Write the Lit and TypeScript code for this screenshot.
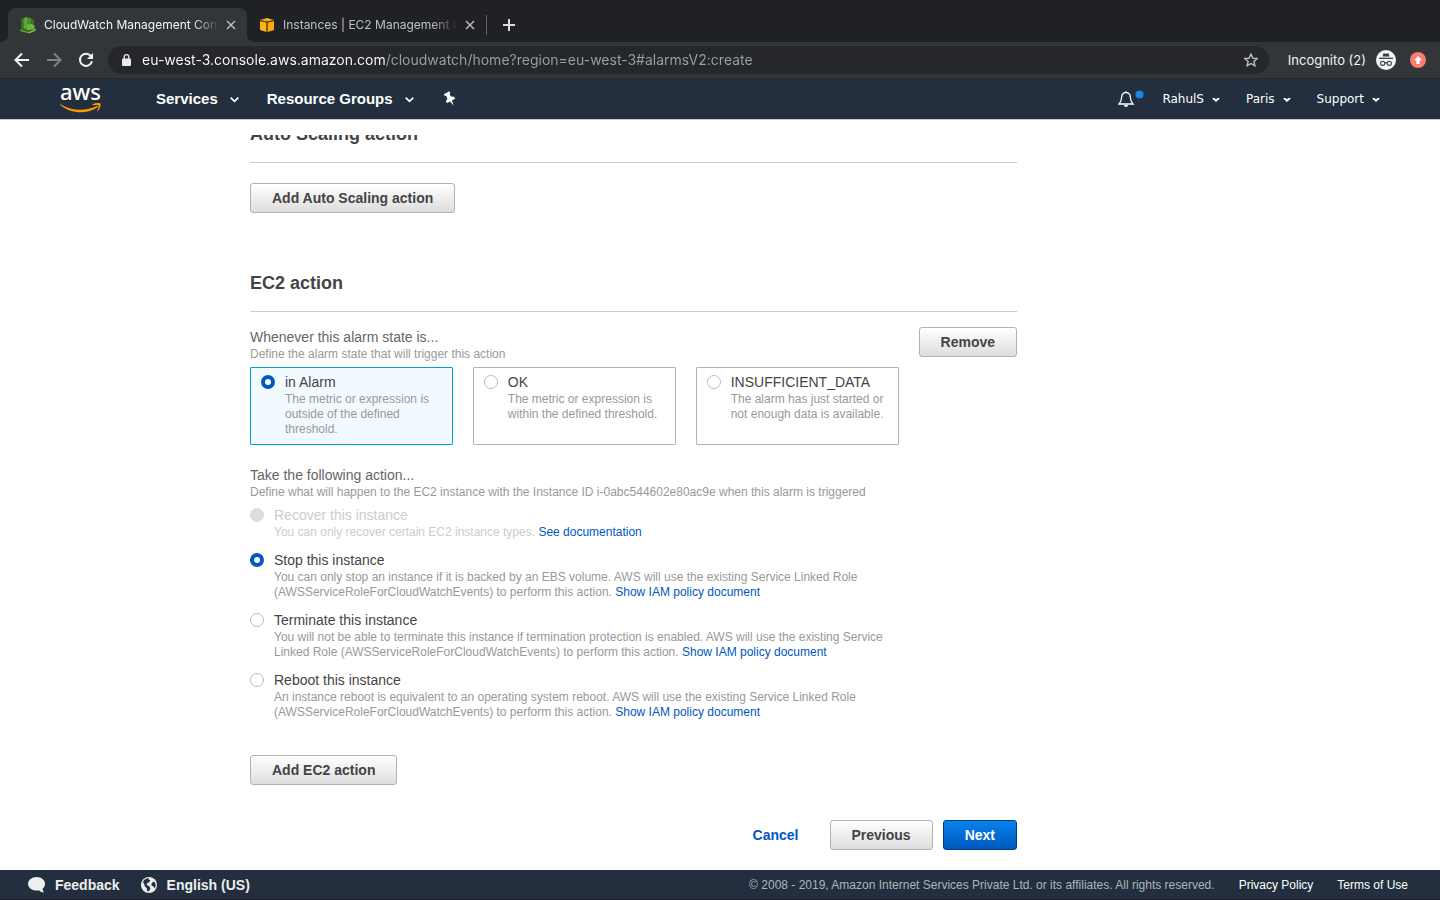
import { LitElement, html, css } from "lit";
import { customElement, state } from "lit/decorators.js";
import { classMap } from "lit/directives/class-map.js";

const resetButtons = css`
  :host,
  * {
    box-sizing: border-box;
  }
  button {
    margin: 0;
    padding: 0;
    border: 0;
    background: none;
    font: inherit;
    color: inherit;
    cursor: pointer;
    display: inline-flex;
    align-items: center;
    white-space: nowrap;
  }
  svg {
    display: block;
    flex: none;
  }
`;

const closeIcon = html`<svg width="10" height="10" viewBox="0 0 10 10">
  <path d="M1 1l8 8M9 1l-8 8" stroke="currentColor" stroke-width="1.4" fill="none" />
</svg>`;

const cloudWatchIcon = html`<svg width="18" height="18" viewBox="0 0 18 18">
  <path d="M1 13.500l7-2.500 9 2-7 3z" fill="#3a7323" />
  <path d="M2.500 3L5 1.800V12l-2.500 1z" fill="#3f7f26" />
  <path d="M5 1.800L8 1v11.500L5 12.800z" fill="#5fa636" />
  <path d="M8 1l4.500 1.500V9L8 10z" fill="#4a8f2c" />
  <path d="M8 8.500l4.500-.8L15.500 9v4.500L8 14z" fill="#6cb33e" />
  <path d="M12.500 2.500v5.200L15 9V4z" fill="#3a7323" />
  <path d="M1 13.500l9 2.500v1.500l-9-2.500z" fill="#5fa23a" />
  <path d="M10 16l7-3v1.500l-7 3z" fill="#86c257" />
</svg>`;

const ec2Icon = html`<svg width="16" height="16" viewBox="0 0 16 16">
  <path d="M1 3l7-2 7 2-7 1.500z" fill="#fcb316" />
  <path d="M1 4l6.500 1.500V15L1 13z" fill="#fcb316" />
  <path d="M8.500 5.500L15 4v9l-6.500 2z" fill="#fbaa0a" />
  <path d="M1 3.500l7 1.500 7-1.500M8 5v10" stroke="#7a4d08" stroke-width=".8" fill="none" />
</svg>`;

@customElement("browser-chrome")
export class BrowserChrome extends LitElement {
  static styles = [
    resetButtons,
    css`
      :host {
        display: block;
        font-family: Inter, "Noto Sans", sans-serif;
        color: #f1f3f4;
        background: #202124;
      }
      .strip {
        display: flex;
        height: 42px;
        padding: 8px 8px 0;
      }
      .tab {
        position: relative;
        display: flex;
        align-items: center;
        width: 239px;
        padding: 0 11px;
        gap: 7px;
        font-size: 12px;
        color: #bdc1c6;
      }
      .tab.active {
        background: #323639;
        color: #f1f3f4;
        border-radius: 8px 8px 0 0;
      }
      .tab.active::before,
      .tab.active::after {
        content: "";
        position: absolute;
        bottom: 0;
        width: 8px;
        height: 8px;
      }
      .tab.active::before {
        right: 100%;
        background: radial-gradient(circle at 0 0, transparent 8px, #323639 8px);
      }
      .tab.active::after {
        left: 100%;
        background: radial-gradient(circle at 100% 0, transparent 8px, #323639 8px);
      }
      .title {
        flex: 1;
        min-width: 0;
        overflow: hidden;
        white-space: nowrap;
        line-height: 16px;
        mask-image: linear-gradient(to right, #000 85%, transparent);
      }
      .icon {
        width: 18px;
        display: flex;
        justify-content: center;
      }
      .tab .close {
        color: #bdc1c6;
      }
      .divider {
        width: 1px;
        height: 20px;
        align-self: center;
        background: #5f6368;
      }
      .new {
        padding: 0 16px;
        color: #dadce0;
      }
      .toolbar {
        display: flex;
        align-items: center;
        height: 37px;
        padding: 0 14px;
        background: #323639;
        border-bottom: 1px solid #25282a;
      }
      .moves {
        display: flex;
        gap: 16px;
      }
      .moves .off {
        color: #7f8387;
      }
      .omnibox {
        flex: 1;
        display: flex;
        align-items: center;
        gap: 10px;
        height: 28px;
        margin: 0 19px 0 14px;
        padding: 0 11px 0 13px;
        border-radius: 14px;
        background: #25272a;
      }
      .url {
        flex: 1;
        min-width: 0;
        height: 20px;
        padding: 0;
        border: 0;
        outline: 0;
        font: 14px/20px Inter, "Noto Sans", sans-serif;
        color: #9aa0a6;
        -webkit-text-fill-color: transparent;
        background: linear-gradient(to right, #fff 243px, #9aa0a6 243px);
        -webkit-background-clip: text;
        background-clip: text;
      }
      .profile {
        display: flex;
        align-items: center;
        gap: 10px;
        font-size: 13px;
      }
      .update {
        margin-left: 14px;
      }
    `,
  ];

  render() {
    return html`
      <div class="strip">
        <div class="tab active">
          <span class="icon">${cloudWatchIcon}</span>
          <span class="title">CloudWatch Management Console</span>
          <button class="close" aria-label="Close tab">${closeIcon}</button>
        </div>
        <div class="tab">
          <span class="icon">${ec2Icon}</span>
          <span class="title">Instances | EC2 Management Console</span>
          <button class="close" aria-label="Close tab">${closeIcon}</button>
        </div>
        <span class="divider"></span>
        <button class="new" aria-label="New tab">
          <svg width="12" height="12" viewBox="0 0 12 12">
            <path d="M6 0v12M0 6h12" stroke="currentColor" stroke-width="2" />
          </svg>
        </button>
      </div>
      <div class="toolbar">
        <div class="moves">
          <button aria-label="Back">
            <svg width="16" height="16" viewBox="0 0 16 16" fill="none" stroke="currentColor" stroke-width="2">
              <path d="M15 8H2M8 1.500L1.500 8 8 14.500" />
            </svg>
          </button>
          <button class="off" aria-label="Forward">
            <svg width="16" height="16" viewBox="0 0 16 16" fill="none" stroke="currentColor" stroke-width="2">
              <path d="M1 8h13M8 1.500L14.500 8 8 14.500" />
            </svg>
          </button>
          <button aria-label="Reload">
            <svg width="16" height="16" viewBox="0 0 16 16">
              <path d="M13.200 4.500A6.100 6.100 0 1 0 14 9.200" fill="none" stroke="currentColor" stroke-width="2" />
              <path d="M15 1v6H9z" fill="currentColor" />
            </svg>
          </button>
        </div>
        <div class="omnibox">
          <svg width="11" height="12" viewBox="0 0 11 12">
            <rect x="1" y="4.500" width="9" height="7.500" rx="1" fill="#e8eaed" />
            <path d="M3.200 5V3a2.300 2.300 0 0 1 4.600 0v2" fill="none" stroke="#e8eaed" stroke-width="1.300" />
          </svg>
          <input
            class="url"
            aria-label="Address"
            value="eu-west-3.console.aws.amazon.com/cloudwatch/home?region=eu-west-3#alarmsV2:create"
          />
          <button aria-label="Bookmark">
            <svg width="14" height="14" viewBox="0 0 14 14">
              <path
                d="M7 1l1.800 4.100 4.400.4-3.300 2.900 1 4.400L7 10.500l-3.900 2.300 1-4.400L.8 5.500l4.400-.4z"
                fill="none"
                stroke="#bdc1c6"
                stroke-width="1.400"
              />
            </svg>
          </button>
        </div>
        <div class="profile">
          <span>Incognito (2)</span>
          <svg width="20" height="20" viewBox="0 0 20 20">
            <circle cx="10" cy="10" r="10" fill="#f1f3f4" />
            <path d="M6.600 6.500l.9-3.200 2.500.5 2.500-.5.9 3.200z" fill="#3c4043" />
            <path d="M3 8.300h14" stroke="#3c4043" stroke-width="1.300" />
            <g fill="none" stroke="#3c4043" stroke-width="1.100">
              <circle cx="6.700" cy="13.300" r="2.100" />
              <circle cx="13.300" cy="13.300" r="2.100" />
              <path d="M8.800 13q1.200-.7 2.400 0" />
            </g>
          </svg>
        </div>
        <button class="update" aria-label="Update available">
          <svg width="16" height="16" viewBox="0 0 16 16">
            <circle cx="8" cy="8" r="8" fill="#fa7b72" />
            <path d="M8 4l4 4.200H9.700V12H6.300V8.200H4z" fill="#fff" />
          </svg>
        </button>
      </div>
    `;
  }
}

const wideChevron = html`<svg width="9" height="8" viewBox="0 0 9 8">
  <path d="M.7 2.700l3.800 3.600 3.800-3.600" fill="none" stroke="#fff" stroke-width="1.700" />
</svg>`;
const smallChevron = html`<svg width="8" height="7" viewBox="0 0 8 7">
  <path d="M.6 2h2l1.400 1.200L5.400 2h2v1L4 6 .6 3z" fill="#fff" />
</svg>`;

@customElement("aws-nav")
export class AwsNav extends LitElement {
  static styles = [
    resetButtons,
    css`
      :host {
        display: flex;
        align-items: center;
        height: 41px;
        padding: 0 60px;
        background: #232f3e;
        border-bottom: 1px solid #c8ccd0;
        color: #fff;
      }
      .logo {
        display: flex;
        flex-direction: column;
        align-items: center;
        width: 41px;
        margin-right: 55px;
        color: #fff;
        text-decoration: none;
        font: 500 22px/11px "Noto Sans", sans-serif;
      }
      .word {
        height: 17px;
      }
      .main {
        display: flex;
        align-items: center;
        gap: 28px;
        font: bold 15px/20px "Liberation Sans", Arial, sans-serif;
      }
      .main button {
        gap: 12px;
      }
      .side {
        display: flex;
        align-items: center;
        gap: 26px;
        margin-left: auto;
        font: 12px/18px "DejaVu Sans", Verdana, sans-serif;
      }
      .side button {
        gap: 8px;
      }
      .side .bell {
        margin-right: -8px;
      }
    `,
  ];

  render() {
    return html`
      <a class="logo" href="#" aria-label="aws">
        <span class="word">aws</span>
        <svg width="41" height="10" viewBox="0 0 41 10">
          <path d="M.5 1.200C12 8 25 8.300 36.500 3.200c1-.4 1.700.6.900 1.200C27 11.500 10.500 10.800.3 1.900c-.4-.4-.2-.9.200-.7z" fill="#f90" />
          <path d="M32.500 1.500C35 0 39.500-.3 40.300.6c.8 1-.2 5.400-2.500 7.600-.4.300-.7.200-.5-.3.600-1.400 1.700-4.700 1.200-5.500-.6-.7-4-.4-5.600-.2-.5.100-.7-.4-.4-.7z" fill="#f90" />
        </svg>
      </a>
      <div class="main">
        <button>Services ${wideChevron}</button>
        <button>Resource Groups ${wideChevron}</button>
        <button aria-label="Pin shortcuts">
          <svg width="16" height="16" viewBox="0 0 16 16">
            <path
              d="M4.800.8h6.400v1.700l-1.200.8v3l2.600 1.700v2.200H9L8 15.600 7 10.200H3.400V8L6 6.300v-3l-1.200-.8z"
              transform="rotate(-28 8 8)"
              fill="#fff"
            />
          </svg>
        </button>
      </div>
      <div class="side">
        <button class="bell" aria-label="Notifications">
          <svg width="26" height="18" viewBox="0 0 26 18">
            <path
              d="M8 1.200v1.300M8 2.500c-3 0-4.400 2-4.400 5 0 3.500-1 4.700-2.600 6.500h14c-1.600-1.800-2.600-3-2.600-6.500 0-3-1.400-5-4.400-5z"
              fill="none"
              stroke="#fff"
              stroke-width="1.300"
            />
            <path d="M6 15h4a2 2 0 0 1-4 0z" fill="#fff" />
            <circle cx="21.500" cy="4.500" r="4" fill="#1a83e8" />
          </svg>
        </button>
        <button>RahulS ${smallChevron}</button>
        <button>Paris ${smallChevron}</button>
        <button>Support ${smallChevron}</button>
      </div>
    `;
  }
}

interface AlarmState {
  id: string;
  title: string;
  hint: string;
}

interface Ec2Action {
  id: string;
  title: string;
  hint: string;
  link: string;
  disabled?: boolean;
}

const STATES: AlarmState[] = [
  { id: "alarm", title: "in Alarm", hint: "The metric or expression is outside of the defined threshold." },
  { id: "ok", title: "OK", hint: "The metric or expression is within the defined threshold." },
  { id: "nodata", title: "INSUFFICIENT_DATA", hint: "The alarm has just started or not enough data is available." },
];

const ACTIONS: Ec2Action[] = [
  {
    id: "recover",
    title: "Recover this instance",
    hint: "You can only recover certain EC2 instance types.",
    link: "See documentation",
    disabled: true,
  },
  {
    id: "stop",
    title: "Stop this instance",
    hint: "You can only stop an instance if it is backed by an EBS volume. AWS will use the existing Service Linked Role (AWSServiceRoleForCloudWatchEvents) to perform this action.",
    link: "Show IAM policy document",
  },
  {
    id: "terminate",
    title: "Terminate this instance",
    hint: "You will not be able to terminate this instance if termination protection is enabled. AWS will use the existing Service Linked Role (AWSServiceRoleForCloudWatchEvents) to perform this action.",
    link: "Show IAM policy document",
  },
  {
    id: "reboot",
    title: "Reboot this instance",
    hint: "An instance reboot is equivalent to an operating system reboot. AWS will use the existing Service Linked Role (AWSServiceRoleForCloudWatchEvents) to perform this action.",
    link: "Show IAM policy document",
  },
];

@customElement("alarm-actions")
export class AlarmActions extends LitElement {
  @state() private alarmState = "alarm";
  @state() private action = "stop";

  static styles = [
    resetButtons,
    css`
      :host {
        display: block;
        color: #444;
        font: 14px/20px "Liberation Sans", Arial, sans-serif;
      }
      .page {
        max-width: 1017px;
        padding: 0 0 20px 250px;
      }
      h2 {
        margin: 0;
        padding-bottom: 16px;
        border-bottom: 1px solid #ccc;
        font-size: 18px;
        line-height: 24px;
      }
      .scaling {
        display: flex;
        flex-direction: column;
        align-items: flex-start;
        gap: 20px;
        margin-bottom: 58px;
      }
      .scaling h2 {
        align-self: stretch;
      }
      .page .btn {
        height: 30px;
        padding: 0 21px;
        border: 1px solid #b3b3b3;
        border-radius: 3px;
        background: linear-gradient(#fff, #ddd);
        font-weight: bold;
      }
      .page .primary {
        border-color: #00407f;
        background: linear-gradient(#0a80ee, #0059bd);
        color: #fff;
      }
      .row {
        display: flex;
        align-items: flex-start;
        justify-content: space-between;
        gap: 20px;
        margin-top: 15px;
      }
      .fields {
        flex: 0 1 649px;
        display: flex;
        flex-direction: column;
        gap: 20px;
      }
      fieldset {
        min-width: 0;
        margin: 0;
        padding: 0;
        border: 0;
      }
      legend {
        padding: 0;
        color: #666;
      }
      .hint {
        display: block;
        font-size: 12px;
        line-height: 15px;
        color: #999;
      }
      .title {
        display: block;
        padding-bottom: 1px;
        line-height: 18px;
      }
      .cards {
        display: grid;
        grid-template-columns: repeat(3, 1fr);
        gap: 20px;
        margin-top: 5px;
      }
      .card {
        display: flex;
        gap: 10px;
        padding: 5px 10px 7px;
        border: 1px solid #aab7b8;
        border-radius: 1px;
      }
      .card.on {
        border-color: #00a1c9;
        background: #f1faff;
      }
      .options {
        display: flex;
        flex-direction: column;
        gap: 11px;
        margin-top: 6px;
      }
      .option {
        display: flex;
        gap: 10px;
      }
      .off label,
      .off .hint {
        color: #ccc;
      }
      input {
        appearance: none;
        flex: none;
        width: 14px;
        height: 14px;
        margin: 2px 0;
        border: 1px solid #bbb;
        border-radius: 50%;
        background: #fff;
      }
      input:checked {
        border: 4px solid #0059c1;
      }
      input:disabled {
        border-color: #ddd;
        background: #ddd;
      }
      a {
        color: #0058bf;
        text-decoration: none;
      }
      .add {
        margin-top: 35px;
      }
      .footer {
        display: flex;
        justify-content: flex-end;
        gap: 10px;
        margin-top: 35px;
      }
      .footer .cancel {
        margin-right: 21px;
        color: #0058bf;
        font-weight: bold;
      }
    `,
  ];

  private renderState(s: AlarmState) {
    const on = this.alarmState === s.id;
    return html`<label class=${classMap({ card: true, on })}>
      <input type="radio" name="state" .checked=${on} @change=${() => (this.alarmState = s.id)} />
      <span><span class="title">${s.title}</span><span class="hint">${s.hint}</span></span>
    </label>`;
  }

  private renderAction(a: Ec2Action) {
    return html`<div class=${classMap({ option: true, off: !!a.disabled })}>
      <input
        type="radio"
        name="action"
        id=${a.id}
        ?disabled=${a.disabled}
        .checked=${this.action === a.id}
        @change=${() => (this.action = a.id)}
      />
      <div>
        <label class="title" for=${a.id}>${a.title}</label>
        <span class="hint">${a.hint} <a href="#">${a.link}</a></span>
      </div>
    </div>`;
  }

  render() {
    return html`<div class="page">
      <section class="scaling">
        <h2>Auto Scaling action</h2>
        <button class="btn">Add Auto Scaling action</button>
      </section>
      <section>
        <h2>EC2 action</h2>
        <div class="row">
          <div class="fields">
            <fieldset>
              <legend>Whenever this alarm state is...</legend>
              <span class="hint">Define the alarm state that will trigger this action</span>
              <div class="cards">${STATES.map((s) => this.renderState(s))}</div>
            </fieldset>
            <fieldset>
              <legend>Take the following action...</legend>
              <span class="hint"
                >Define what will happen to the EC2 instance with the Instance ID i-0abc544602e80ac9e when this alarm is
                triggered</span
              >
              <div class="options">${ACTIONS.map((a) => this.renderAction(a))}</div>
            </fieldset>
          </div>
          <button class="btn">Remove</button>
        </div>
        <button class="btn add">Add EC2 action</button>
      </section>
      <div class="footer">
        <button class="cancel">Cancel</button>
        <button class="btn">Previous</button>
        <button class="btn primary">Next</button>
      </div>
    </div>`;
  }
}

@customElement("aws-footer")
export class AwsFooter extends LitElement {
  static styles = [
    resetButtons,
    css`
      :host {
        display: flex;
        align-items: center;
        gap: 21px;
        height: 30px;
        padding: 0 32px 0 28px;
        background: #232f3e;
        border-bottom: 1px solid #1c1a2e;
        color: #eee;
        font: 12px/16px "Liberation Sans", Arial, sans-serif;
      }
      button {
        gap: 10px;
        font-weight: bold;
        font-size: 14px;
      }
      .legal {
        display: flex;
        gap: 24px;
        margin-left: auto;
        color: #aab7b8;
      }
      a {
        color: #fff;
        text-decoration: none;
      }
    `,
  ];

  render() {
    return html`
      <button>
        <svg width="17" height="16" viewBox="0 0 17 16">
          <path
            d="M8.500 0C13.200 0 17 2.900 17 6.700c0 2.300-1 3.800-2.200 4.900-.2 1.400.2 2.700 1.200 4-2.200-.1-3.800-.9-4.900-2.300-.8.200-1.700.3-2.600.3C3.800 13.600 0 10.600 0 6.800S3.800 0 8.500 0z"
            fill="#eee"
          />
        </svg>
        Feedback
      </button>
      <button>
        <svg width="16" height="16" viewBox="0 0 16 16">
          <circle cx="8" cy="8" r="8" fill="#eee" />
          <path
            d="M3 3.200C4.500 1.700 6 1.200 8 1.200l-.6 1.400 2 .6-1.200 2-2.200 1-.4 1.600 2.800 1.700 1 1.800-1.600 3.200-1.600-.6-.4-2.600-2-2-.6-2.400-1.200-1.600z"
            fill="#232f3e"
          />
          <path d="M10.600 6.200l2-1.600 1.800 1.600.4 2.600-1.200 2.400-1.400-2-1.800-.6z" fill="#232f3e" />
        </svg>
        English (US)
      </button>
      <div class="legal">
        <span>© 2008 - 2019, Amazon Internet Services Private Ltd. or its affiliates. All rights reserved.</span>
        <a href="#">Privacy Policy</a>
        <a href="#">Terms of Use</a>
      </div>
    `;
  }
}

@customElement("app-root")
export class AppRoot extends LitElement {
  static styles = css`
    :host {
      display: flex;
      flex-direction: column;
      height: 100vh;
      background: #fff;
    }
    main {
      flex: 1;
      min-height: 0;
      display: flex;
      flex-direction: column;
      padding-top: 15px;
    }
    /* The form rests at the end of its scroll range. */
    .viewport {
      flex: 1;
      min-height: 0;
      overflow: hidden;
      display: flex;
      flex-direction: column;
      justify-content: flex-end;
    }
    alarm-actions {
      flex: none;
    }
  `;

  render() {
    return html`
      <browser-chrome></browser-chrome>
      <aws-nav></aws-nav>
      <main>
        <div class="viewport"><alarm-actions></alarm-actions></div>
      </main>
      <aws-footer></aws-footer>
    `;
  }
}
